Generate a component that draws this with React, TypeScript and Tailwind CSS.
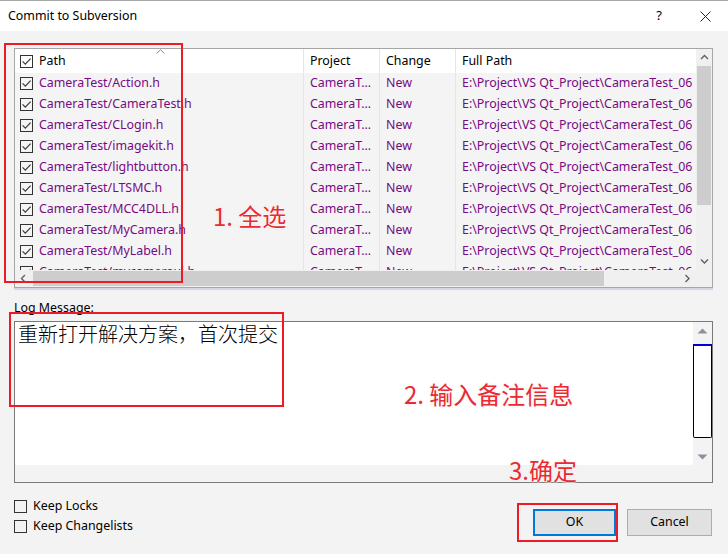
import React from "react";

const rows = [
  "CameraTest/Action.h",
  "CameraTest/CameraTest.h",
  "CameraTest/CLogin.h",
  "CameraTest/imagekit.h",
  "CameraTest/lightbutton.h",
  "CameraTest/LTSMC.h",
  "CameraTest/MCC4DLL.h",
  "CameraTest/MyCamera.h",
  "CameraTest/MyLabel.h",
  "CameraTest/mycameraui.h",
];

function Check({ checked }: { checked: boolean }) {
  return (
    <span className="inline-flex w-[13px] h-[13px] border border-[#333333] items-center justify-center shrink-0">
      {checked && (
        <svg width="11" height="11" viewBox="0 0 11 11">
          <path d="M1.6 5.4 L4.3 8.1 L9.6 2.6" fill="none" stroke="#3a3a3a" strokeWidth="1.2" />
        </svg>
      )}
    </span>
  );
}

function Chevron({ dir }: { dir: "up" | "down" | "left" | "right" }) {
  const d =
    dir === "up"
      ? "M1 5 L4.5 1.5 L8 5"
      : dir === "down"
      ? "M1 1.5 L4.5 5 L8 1.5"
      : dir === "left"
      ? "M5 1 L1.5 4.5 L5 8"
      : "M1.5 1 L5 4.5 L1.5 8";
  const w = dir === "up" || dir === "down" ? 9 : 7;
  const h = dir === "up" || dir === "down" ? 7 : 9;
  return (
    <svg width={w} height={h} viewBox={`0 0 ${w} ${h}`}>
      <path d={d} fill="none" stroke="#606060" strokeWidth="1.4" />
    </svg>
  );
}

export default function App() {
  const ui = "font-['Segoe_UI','Noto_Sans','Noto_Sans_CJK_SC',sans-serif]";
  return (
    <div className={`relative w-[728px] h-[554px] overflow-hidden bg-[#f3f3f3] text-[12.4px] text-black flex flex-col ${ui}`}>
      {/* title bar */}
      <div className="h-[31px] shrink-0 bg-white border-t border-[#a8a8a8] flex items-center">
        <div className="pl-[8px] flex-1">Commit to Subversion</div>
        <div className="w-[46px] text-center text-[13px]">?</div>
        <div className="w-[46px] flex items-center justify-center">
          <svg width="11" height="11" viewBox="0 0 11 11">
            <path d="M0.5 0.5 L10.5 10.5 M10.5 0.5 L0.5 10.5" stroke="#222" strokeWidth="1" />
          </svg>
        </div>
      </div>

      <div className="flex flex-col pl-[14px] pr-[15px]">
        {/* list */}
        <div className="mt-[17px] h-[240px] border border-[#a6a6a6] flex">
          <div className="w-[681px] flex flex-col">
            {/* header */}
            <div className="relative h-[24px] bg-white grid grid-cols-[289px_76px_76px_240px] items-center">
              <div className="h-full flex items-center pl-[5px] gap-[6px] border-r border-[#e5e5e5]">
                <Check checked />
                <span>Path</span>
              </div>
              <div className="h-full flex items-center pl-[6px] border-r border-[#e5e5e5]">Project</div>
              <div className="h-full flex items-center pl-[6px] border-r border-[#e5e5e5]">Change</div>
              <div className="h-full flex items-center pl-[6px] whitespace-nowrap overflow-hidden">Full Path</div>
              <div className="absolute left-[141px] top-[0px]">
                <svg width="9" height="5" viewBox="0 0 9 5">
                  <path d="M0.5 4.5 L4.5 0.8 L8.5 4.5" fill="none" stroke="#8a8a8a" strokeWidth="1" />
                </svg>
              </div>
            </div>
            {/* rows */}
            <div className="h-[197px] overflow-hidden bg-[#f4f4f4] text-[#780a82]">
              {rows.map((r) => (
                <div key={r} className="h-[21px] grid grid-cols-[289px_76px_76px_240px]">
                  <div className="h-full flex items-center pl-[5px] gap-[6px] border-r border-[#e2e7ee] whitespace-nowrap overflow-hidden">
                    <Check checked />
                    <span>{r}</span>
                  </div>
                  <div className="h-full flex items-center pl-[6px] border-r border-[#e2e7ee] whitespace-nowrap overflow-hidden">
                    CameraT…
                  </div>
                  <div className="h-full flex items-center pl-[6px] border-r border-[#e2e7ee]">New</div>
                  <div className="h-full flex items-center pl-[6px] whitespace-nowrap overflow-hidden">
                    E:\Project\VS Qt_Project\CameraTest_06
                  </div>
                </div>
              ))}
            </div>
            {/* horizontal scrollbar */}
            <div className="h-[17px] bg-[#f0f0f0] flex items-center">
              <div className="w-[17px] h-full flex items-center justify-center">
                <Chevron dir="left" />
              </div>
              <div className="ml-[1px] w-[571px] h-[15px] bg-[#cdcdcd]" />
              <div className="flex-1" />
              <div className="w-[17px] h-full flex items-center justify-center">
                <Chevron dir="right" />
              </div>
            </div>
          </div>
          {/* vertical scrollbar */}
          <div className="flex-1 flex flex-col bg-[#f0f0f0]">
            <div className="h-[17px] flex items-center justify-center">
              <Chevron dir="up" />
            </div>
            <div className="mx-[1px] h-[139px] bg-[#cdcdcd]" />
            <div className="flex-1" />
            <div className="h-[17px] flex items-center justify-center">
              <Chevron dir="down" />
            </div>
            <div className="h-[17px] bg-[#f0f0f0]" />
          </div>
        </div>
        <div className="h-[2px] bg-[#d3d8e4]" />

        {/* log message */}
        <div className="mt-[10px] h-[16px] leading-[16px]">Log Message:</div>
        <div className="mt-[5px] h-[162px] border border-[#7a7a7a] flex flex-col">
          <div className="h-[143px] flex">
            <div className="flex-1 bg-white pl-[3px] text-[20px] leading-[24px] font-light font-['Noto_Sans_CJK_SC','SimSun',sans-serif]">
              重新打开解决方案，首次提交
            </div>
            <div className="w-[19px] bg-[#f3f3f3] flex flex-col">
              <div className="h-[17px] flex items-center justify-center">
                <svg width="11" height="6" viewBox="0 0 11 6">
                  <path d="M0.5 5.5 L5.5 0.5 L10.5 5.5 Z" fill="#8c919e" />
                </svg>
              </div>
              <div className="mt-[5px] h-[94px] bg-white border-t-2 border-t-[#0000d8] border-x border-b border-black rounded-b-[2px]" />
              <div className="flex-1" />
              <div className="h-[17px] flex items-center justify-center">
                <svg width="11" height="6" viewBox="0 0 11 6">
                  <path d="M0.5 0.5 L5.5 5.5 L10.5 0.5 Z" fill="#8c919e" />
                </svg>
              </div>
            </div>
          </div>
          <div className="flex-1 bg-[#f3f3f3]" />
        </div>

        {/* bottom */}
        <div className="flex items-start">
          <div className="mt-[13px] flex flex-col">
            <div className="h-[20px] flex items-center gap-[6px]">
              <Check checked={false} />
              <span>Keep Locks</span>
            </div>
            <div className="h-[20px] flex items-center gap-[6px]">
              <Check checked={false} />
              <span>Keep Changelists</span>
            </div>
          </div>
          <div className="flex-1" />
          <div className="mt-[26px] flex gap-[11px] mr-[1px]">
            <button className="w-[83px] h-[27px] border-2 border-[#0078d7] bg-[#e1e1e1] text-[12.4px]">OK</button>
            <button className="w-[85px] h-[27px] border border-[#adadad] bg-[#e1e1e1] text-[12.4px]">Cancel</button>
          </div>
        </div>
      </div>

      {/* annotations */}
      <div className="absolute left-[4px] top-[43px] w-[179px] h-[240px] border-2 border-[#ed1c24]" />
      <div className="absolute left-[9px] top-[312px] w-[275px] h-[95px] border-2 border-[#ed1c24]" />
      <div className="absolute left-[517px] top-[503px] w-[101px] h-[39px] border-2 border-[#ed1c24]" />
      <div className="absolute left-[213px] top-[200px] text-[24px] leading-[32px] text-[#ea2a32] whitespace-nowrap font-['Noto_Sans_CJK_SC',sans-serif] [text-shadow:0_0_2px_#fff,0_0_2px_#fff,0_0_3px_#ddd]">
        1. 全选
      </div>
      <div className="absolute left-[404px] top-[378px] text-[24px] leading-[32px] text-[#ea2a32] whitespace-nowrap font-['Noto_Sans_CJK_SC',sans-serif] [text-shadow:0_0_2px_#fff,0_0_2px_#fff,0_0_3px_#ddd]">
        2. 输入备注信息
      </div>
      <div className="absolute left-[509px] top-[454px] text-[24px] leading-[32px] text-[#ea2a32] whitespace-nowrap font-['Noto_Sans_CJK_SC',sans-serif] [text-shadow:0_0_2px_#fff,0_0_2px_#fff,0_0_3px_#ddd]">
        3.确定
      </div>
    </div>
  );
}
